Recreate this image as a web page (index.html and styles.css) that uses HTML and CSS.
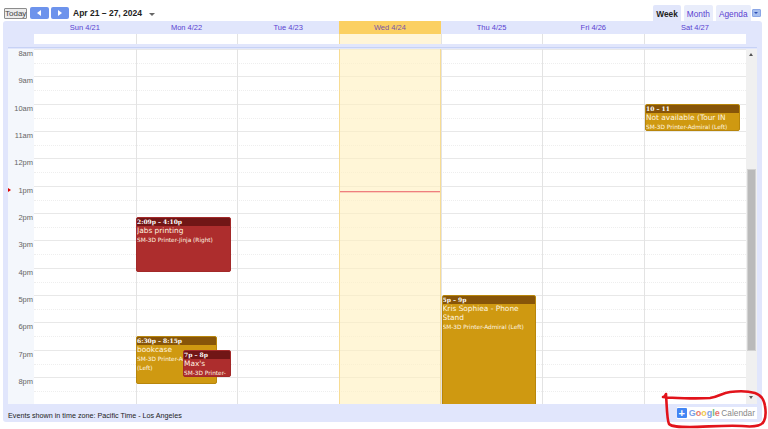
FILE: index.html
```html
<!DOCTYPE html>
<html lang="en">
<head>
<meta charset="utf-8">
<title>Calendar</title>
<link rel="stylesheet" href="styles.css">
</head>
<body>
<div class="page">
  <header class="toolbar">
    <button class="today">Today</button>
    <button class="nav"><span class="tri-left"></span></button>
    <button class="nav"><span class="tri-right"></span></button>
    <span class="range">Apr 21 – 27, 2024</span>
    <span class="range-arrow"></span>
    <nav class="tabs">
      <span class="tab active">Week</span>
      <span class="tab">Month</span>
      <span class="tab">Agenda</span>
      <span class="tab-menu"><span class="tab-menu-arrow"></span></span>
    </nav>
  </header>
  <section class="cal">
    <div class="days">
      <div class="day">Sun 4/21</div><div class="day">Mon 4/22</div><div class="day">Tue 4/23</div>
      <div class="day today-col">Wed 4/24</div>
      <div class="day">Thu 4/25</div><div class="day">Fri 4/26</div><div class="day">Sat 4/27</div>
    </div>
    <div class="allday">
      <div></div><div></div><div></div><div class="today-allday"></div><div></div><div></div><div></div>
    </div>
    <div class="sep"></div>
    <div class="body">
      <div class="gutter">
        <div class="hr">8am</div><div class="hr">9am</div><div class="hr">10am</div><div class="hr">11am</div><div class="hr">12pm</div>
        <div class="hr now"><span class="now-mark"></span>1pm</div>
        <div class="hr">2pm</div><div class="hr">3pm</div><div class="hr">4pm</div><div class="hr">5pm</div><div class="hr">6pm</div><div class="hr">7pm</div><div class="hr">8pm</div>
      </div>
      <div class="grid">
        <div class="lines">
          <div class="line"></div><div class="line"></div><div class="line"></div><div class="line"></div><div class="line"></div><div class="line"></div><div class="line"></div><div class="line"></div><div class="line"></div><div class="line"></div><div class="line"></div><div class="line"></div><div class="line"></div>
        </div>
        <div class="cols">
          <div class="col"></div><div class="col"></div><div class="col"></div>
          <div class="col col-today"><div class="nowline"></div></div>
          <div class="col"></div><div class="col"></div><div class="col"></div>
        </div>
        <article class="ev red ev-jabs"><div class="ev-time">2:09p – 4:10p</div><div class="ev-title">Jabs printing</div><div class="ev-sub">SM-3D Printer-Jinja (Right)</div></article>
        <article class="ev gold ev-book"><div class="ev-time">6:30p – 8:15p</div><div class="ev-title">bookcase</div><div class="ev-sub">SM-3D Printer-Admiral<br>(Left)</div></article>
        <article class="ev red ev-max"><div class="ev-time">7p – 8p</div><div class="ev-title">Max's</div><div class="ev-sub">SM-3D Printer-Jinja (Right)</div></article>
        <article class="ev gold ev-kris"><div class="ev-time">5p – 9p</div><div class="ev-title">Kris Sophiea - Phone Stand</div><div class="ev-sub">SM-3D Printer-Admiral (Left)</div></article>
        <article class="ev gold ev-na"><div class="ev-time">10 – 11</div><div class="ev-title nowrap">Not available (Tour IN</div><div class="ev-sub">SM-3D Printer-Admiral (Left)</div></article>
      </div>
      <div class="scroll">
        <span class="sc-up"></span>
        <span class="sc-thumb"></span>
        <span class="sc-down"></span>
      </div>
    </div>
    <footer class="foot">
      <span class="tz">Events shown in time zone: Pacific Time - Los Angeles</span>
      <span class="badge"><span class="plus">+</span><span class="g"><b class="b1">G</b><b class="r1">o</b><b class="y1">o</b><b class="b1">g</b><b class="g1">l</b><b class="r1">e</b></span><span class="calword">Calendar</span></span>
    </footer>
  </section>
  <svg class="scribble" viewBox="0 0 768 429" aria-hidden="true">
    <path d="M666 394 C665 396 664 397 663 397 C672 398 695 399 710 398 C718 397 722 393 730 392 C738 391 748 391 755 393 C761 395 764 399 765 406 C766 412 766 417 764 421 C762 426 752 427 742 426 C725 425 705 427 690 427 C680 427 672 427 669 424 C667 420 667 410 666 394" />
  </svg>
</div>
</body>
</html>
```
FILE: styles.css
```css
* { box-sizing: border-box; }
html, body { margin: 0; padding: 0; background: #fff; }
body { width: 768px; height: 429px; overflow: hidden; font-family: "Liberation Sans", Arial, sans-serif; }
.page { position: relative; width: 768px; height: 429px; padding: 5px 6px 0 3px; }

.toolbar { display: flex; align-items: center; height: 16px; padding-left: 1px; }
.today { width: 23px; height: 11px; margin: 0 3px 0 0; padding: 0; font: 8px/9px "Liberation Sans", sans-serif; color: #444; background: #ececec; border: 1px solid #8c8c8c; border-radius: 1px; }
.nav { width: 18.5px; height: 12px; margin: 0 2px 0 0; padding: 0; border: 0; border-radius: 2px; background: #6d93ec; display: flex; align-items: center; justify-content: center; }
.tri-left, .tri-right { width: 0; height: 0; border-top: 3px solid transparent; border-bottom: 3px solid transparent; }
.tri-left { border-right: 4px solid #fff; }
.tri-right { border-left: 4px solid #fff; }
.range { margin-left: 2px; font-size: 8.5px; font-weight: 700; color: #222; }
.range-arrow { margin: 2px 0 0 7px; width: 0; height: 0; border-left: 3px solid transparent; border-right: 3px solid transparent; border-top: 3px solid #666; }
.tabs { margin-left: auto; display: flex; align-items: flex-end; align-self: flex-end; gap: 3px; margin-right: 1px; }
.tab { height: 16px; padding: 4px 3px 0; font-size: 8.3px; color: #5a3fd0; background: #e9edfb; border-radius: 2px 2px 0 0; }
.tab.active { font-weight: 700; color: #222; background: #e1e6fb; }
.tab-menu { align-self: center; width: 9.5px; height: 8px; margin-left: -2px; background: #a6bfee; border: 1px solid #8aa6e6; border-radius: 1px; display: flex; align-items: center; justify-content: center; }
.tab-menu-arrow { width: 0; height: 0; border-left: 2px solid transparent; border-right: 2px solid transparent; border-top: 2px solid #2d4fb5; }

.cal { height: 401px; background: #e1e6fc; border-radius: 3px; display: flex; flex-direction: column; }
.days, .allday { display: grid; grid-template-columns: repeat(7, 101.7px); padding-left: 31px; }
.days { height: 13px; }
.day { font-size: 7.5px; line-height: 14px; text-align: center; color: #5a3fd0; }
.today-col { background: #fbd062; color: #7a55a8; }
.allday { height: 10px; }
.allday > div { background: #fff; border-left: 1px solid #e3e3e3; }
.allday > div:first-child { border-left: 0; }
.allday > .today-allday { background: #fff5d8; border-left-color: #f5dc9c; }
.sep { height: 1px; margin: 3px 5px 1px; background: #c7d2f5; }

.body { margin-left: 5px; height: 355px; display: flex; position: relative; overflow: hidden; }
.gutter { width: 26px; flex: none; background: #f4f7fc; }
.hr { position: relative; height: 27.33px; padding: 0 1px 0 0; font-size: 7.5px; line-height: 9px; text-align: right; color: #666; }
.now-mark { position: absolute; left: 0; top: 2px; width: 0; height: 0; border-top: 2.5px solid transparent; border-bottom: 2.5px solid transparent; border-left: 3px solid #d00; }

.grid { position: relative; width: 712px; flex: none; background: #fff; }
.lines { position: absolute; inset: 0; }
.line { height: 27.33px; border-top: 1px solid #e8e8e8; position: relative; }
.line::after { content: ""; position: absolute; left: 0; right: 0; top: 13px; border-top: 1px dotted #eee; }
.cols { position: absolute; inset: 0; display: grid; grid-template-columns: repeat(7, 101.7px); }
.col { border-left: 1px solid #e3e3e3; position: relative; }
.col:first-child { border-left: 0; }
.col-today { background: rgba(255, 240, 190, .62); border-left: 1px solid #f7dc94; border-right: 1px solid #f7dc94; }
.nowline { position: absolute; left: 0; right: 0; top: 142px; height: 1px; background: #ee7f7f; box-shadow: 0 1px 0 #fbd0b8; }

.ev { position: absolute; overflow: hidden; border-radius: 2px; color: #fff; font-family: "DejaVu Sans", sans-serif; border: 1px solid transparent; }
.ev.gold { background: #cf9911; border-color: #b8860b; }
.ev.gold .ev-time { background: #875509; }
.ev.red { background: #ad2d2d; border-color: #a32929; }
.ev.red .ev-time { background: #711616; }
.ev-time { height: 8px; font-size: 6px; line-height: 8px; font-family: "DejaVu Serif", serif; font-weight: 700; white-space: nowrap; }
.ev-title { font-size: 7.4px; line-height: 9px; color: #fff6e0; }
.ev-sub { font-size: 5.8px; line-height: 9px; padding-top: 1px; color: #fff6e0; }
.nowrap { white-space: nowrap; overflow: hidden; }
.ev-jabs { left: 102px; top: 167.5px; width: 95px; height: 55px; }
.ev-book { left: 102px; top: 287px; width: 81px; height: 48px; }
.ev-max { left: 149px; top: 300.5px; width: 48px; height: 27.5px; z-index: 1; }
.ev-kris { left: 407.5px; top: 246px; width: 94.5px; height: 110px; border-radius: 2px 2px 0 0; }
.ev-na { left: 611px; top: 54.5px; width: 95px; height: 27px; }

.scroll { width: 11px; flex: none; background: #f0f0f0; position: relative; }
.sc-up, .sc-down { position: absolute; left: 3px; width: 0; height: 0; border-left: 2.5px solid transparent; border-right: 2.5px solid transparent; }
.sc-up { top: 4px; border-bottom: 3px solid #555; }
.sc-down { bottom: 5px; border-top: 3px solid #555; }
.sc-thumb { position: absolute; left: 1px; right: 1px; top: 120px; height: 182px; background: #bababa; border: 1px solid #d2d2d2; }

.foot { flex: 1; display: flex; align-items: center; justify-content: space-between; padding: 0 5px; }
.tz { font-size: 7.2px; color: #222; margin-top: 5px; }
.badge { display: flex; align-items: center; height: 12px; padding-right: 2px; background: #fff; }
.plus { width: 10px; height: 10px; background: #4285f4; color: #fff; font-size: 11px; line-height: 10px; font-weight: 700; text-align: center; border-radius: 1px; margin-right: 2px; }
.g { font-size: 9px; font-weight: 400; }
.g b { font-weight: 700; }
.b1 { color: #7a9fe8; } .r1 { color: #e8766c; } .y1 { color: #f0c850; } .g1 { color: #6cbc80; }
.calword { margin-left: 1.5px; font-size: 8.3px; color: #888; }

.scribble { position: absolute; left: 0; top: 0; width: 768px; height: 429px; pointer-events: none; }
.scribble path { fill: none; stroke: #e2131b; stroke-width: 2.6; stroke-linecap: round; stroke-linejoin: round; }
```
